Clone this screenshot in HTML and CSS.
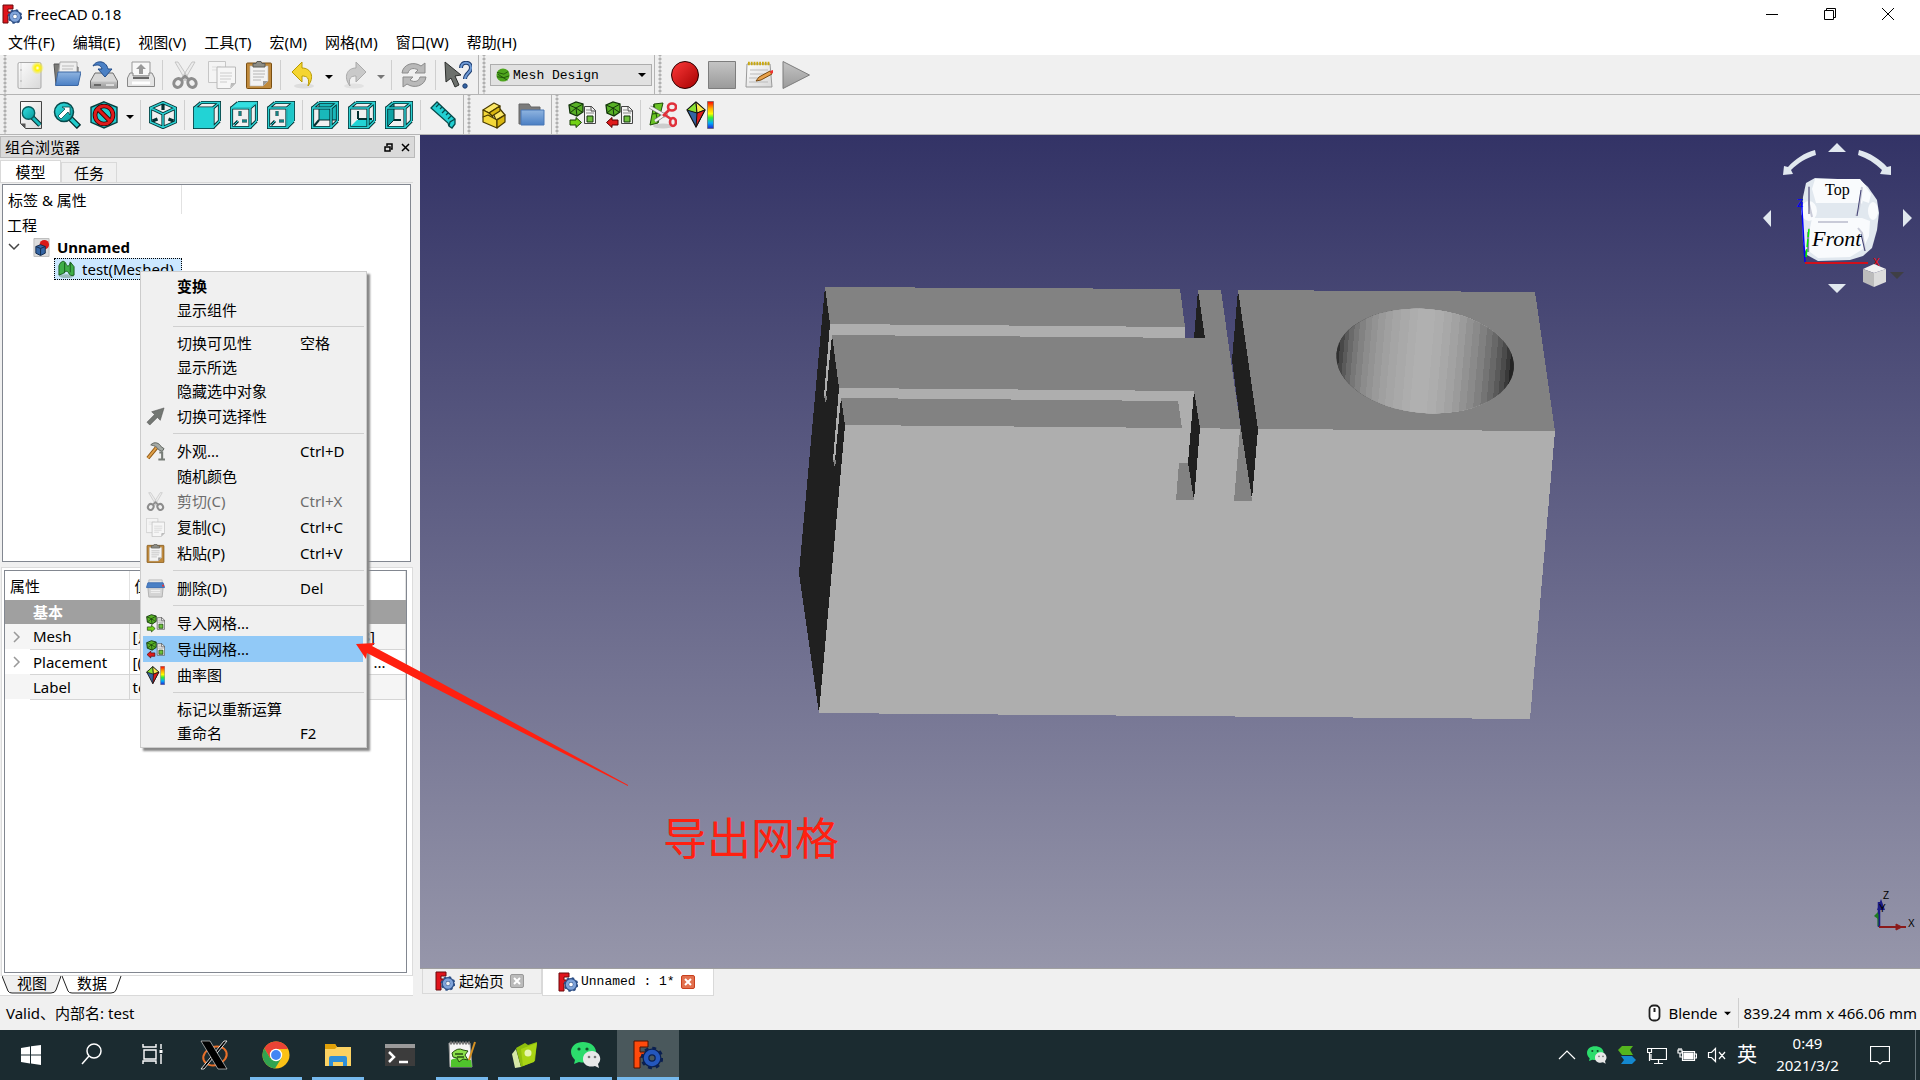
FILE: index.html
```html
<!DOCTYPE html>
<html lang="zh-CN">
<head>
    <meta charset="UTF-8">
    <meta name="viewport" content="width=device-width, initial-scale=1.0">
    <title>FreeCAD 0.18</title>
    <link rel="stylesheet" href="styles.css">
</head>
<body>
    <!-- icons -->
    <svg class="defs" width="0" height="0" aria-hidden="true">
        <defs>
            <linearGradient id="g-blue" x1="0" y1="0" x2="0" y2="1"><stop offset="0" stop-color="#8fb4e0"/><stop offset="1" stop-color="#4a7fc4"/></linearGradient>
            <linearGradient id="g-paper" x1="0" y1="0" x2="1" y2="1"><stop offset="0" stop-color="#fdfdfd"/><stop offset="1" stop-color="#d8d8d8"/></linearGradient>
            <linearGradient id="g-gray" x1="0" y1="0" x2="0" y2="1"><stop offset="0" stop-color="#c4c4c4"/><stop offset="1" stop-color="#9a9a9a"/></linearGradient>
            <linearGradient id="g-red" x1="0" y1="0" x2="1" y2="1"><stop offset="0" stop-color="#ff3a3a"/><stop offset="1" stop-color="#a40000"/></linearGradient>
            <linearGradient id="g-teal" x1="0" y1="0" x2="1" y2="1"><stop offset="0" stop-color="#34e0e2"/><stop offset="1" stop-color="#06989a"/></linearGradient>
            <linearGradient id="g-rainbow" x1="0" y1="0" x2="0" y2="1"><stop offset="0" stop-color="#f00"/><stop offset=".25" stop-color="#fa0"/><stop offset=".45" stop-color="#ff0"/><stop offset=".6" stop-color="#3e3"/><stop offset=".8" stop-color="#0af"/><stop offset="1" stop-color="#22c"/></linearGradient>
            <radialGradient id="g-sun"><stop offset="0" stop-color="#fff"/><stop offset=".35" stop-color="#fff200"/><stop offset="1" stop-color="#fff200" stop-opacity="0"/></radialGradient>
        </defs>
        <symbol id="i-freecad" viewBox="0 0 20 20">
            <path d="M1 1h10v4H6v3h4v3H6v8H1z" fill="#e0141c" stroke="#6b0a0c" stroke-width="1"/>
            <circle cx="13" cy="12.500" r="4.200" fill="none" stroke="#2d4f86" stroke-width="4.600"/>
            <circle cx="13" cy="12.500" r="6" fill="none" stroke="#2d4f86" stroke-width="2.600" stroke-dasharray="2.300 2.410"/>
            <circle cx="13" cy="12.500" r="3.800" fill="none" stroke="#7fa3d9" stroke-width="2.800"/>
        </symbol>
        <symbol id="i-new" viewBox="0 0 28 28">
            <rect x="2" y="1.500" width="23" height="26" rx="1.500" fill="url(#g-paper)" stroke="#a9a9a9"/>
            <path d="M5 2v25" stroke="#ddd"/><circle cx="5" cy="9" r=".8" fill="#aaa"/><circle cx="5" cy="20" r=".8" fill="#aaa"/>
            <circle cx="21.500" cy="7" r="6.500" fill="url(#g-sun)"/>
        </symbol>
        <symbol id="i-open" viewBox="0 0 28 28">
            <path d="M1 3h9l2 3h13v18H3z" fill="#7b7b78" stroke="#555"/>
            <path d="M7 1h17v16H5z" fill="#efefef" stroke="#aaa"/><path d="M9 5h12M9 8h11" stroke="#bbb"/>
            <path d="M5 11h23l-3 13.500H2.500z" fill="url(#g-blue)" stroke="#3c68a5"/>
        </symbol>
        <symbol id="i-save" viewBox="0 0 28 28">
            <path d="M5 12h18l4.500 8v7H.5v-7z" fill="#d8d8d8" stroke="#6d6d6d"/><path d="M1 20.500h26v6H1z" fill="url(#g-gray)"/>
            <path d="M4 24h7" stroke="#666" stroke-width="2"/><path d="M16 24h8" stroke="#ddd" stroke-width="2"/>
            <path d="M3 5C6-1 16-1 18 8h4l-7 8-7-8h4c-1-4-5-5-9-3z" fill="#4a80c5" stroke="#204a87"/>
        </symbol>
        <symbol id="i-print" viewBox="0 0 28 28">
            <path d="M5 1h18v14H5z" fill="#f8f8f8" stroke="#999"/>
            <path d="M14 3l5 5h-3v5h-4V8H9z" fill="#999"/>
            <path d="M3 12h3v3h16v-3h3l2.500 5v8.500H.5V17z" fill="#e4e4e4" stroke="#888"/>
            <path d="M6 17h16" stroke="#666" stroke-width="2"/><path d="M5 22h18" stroke="#fff" stroke-width="3"/>
        </symbol>
        <symbol id="i-cut" viewBox="0 0 28 28">
            <path d="M4 1l3 0 11 17-3 2zM24 1l-3 0-11 17 3 2z" fill="#ececec" stroke="#bbb" stroke-width=".8"/>
            <ellipse cx="7" cy="22" rx="4" ry="4.500" fill="none" stroke="#8d8d8d" stroke-width="3" transform="rotate(30 7 22)"/>
            <ellipse cx="21" cy="22" rx="4" ry="4.500" fill="none" stroke="#8d8d8d" stroke-width="3" transform="rotate(-30 21 22)"/>
            <path d="M10 19l4-4 4 4" fill="none" stroke="#8d8d8d" stroke-width="2.500"/>
        </symbol>
        <symbol id="i-copy" viewBox="0 0 28 28">
            <path d="M.5.5h17v21H.5z" fill="#f4f4f4" stroke="#c6c6c6"/><path d="M4 6h9M4 9h9" stroke="#ddd"/>
            <path d="M9 6h18.500v16l-5 5.500H9z" fill="#f6f6f6" stroke="#b8b8b8"/>
            <path d="M12 12h12M12 15h12M12 18h11M12 21h7" stroke="#ccc"/><path d="M22 27l1-5h5z" fill="#bbb"/>
        </symbol>
        <symbol id="i-paste" viewBox="0 0 28 28">
            <rect x="1.500" y="2" width="25" height="25.500" rx="1" fill="#c08a3c" stroke="#7a4f12"/>
            <path d="M5 5h18v15l-5 5H5z" fill="#f3f3f3" stroke="#bbb" stroke-width=".6"/>
            <path d="M8 10h12M8 13h12M8 16h11M8 19h8" stroke="#b4b4b4"/><path d="M18 25v-5h5z" fill="#999"/>
            <path d="M8 2.500h3l1-2h4l1 2h3V6H8z" fill="#8d8d86" stroke="#5a5a55"/>
        </symbol>
        <symbol id="i-undo" viewBox="0 0 28 28">
            <ellipse cx="15" cy="25" rx="10" ry="2.500" fill="#ddd"/>
            <path d="M3 11L13 1v6c9 0 13 9 6 18 2-8-1-10-6-10v6z" fill="#f5d531" stroke="#b89a00"/>
        </symbol>
        <symbol id="i-redo" viewBox="0 0 28 28">
            <ellipse cx="13" cy="25" rx="10" ry="2.500" fill="#e2e2e2"/>
            <path d="M25 11L15 1v6C6 7 2 16 9 25c-2-8 1-10 6-10v6z" fill="#c9c9c9" stroke="#aaa"/>
        </symbol>
        <symbol id="i-refresh" viewBox="0 0 28 28">
            <path d="M2 12C3 3 14 0 21 5l4-3v10H15l3-3c-5-3-9-1-10 3z" fill="#b9b9b9" stroke="#8b8b8b"/>
            <path d="M26 16c-1 9-12 12-19 7l-4 3V16h10l-3 3c5 3 9 1 10-3z" fill="#b9b9b9" stroke="#8b8b8b"/>
        </symbol>
        <symbol id="i-whatsthis" viewBox="0 0 28 28">
            <path d="M1 1l16 13-6 1 4 9-4 2-4-9-5 4z" fill="#6c706c" stroke="#2b2d2b"/>
            <path d="M17 7c0-7 10-7 10 0 0 5-6 5-6 11" fill="none" stroke="#1d3c6e" stroke-width="4"/>
            <path d="M17 7c0-7 10-7 10 0 0 5-6 5-6 11" fill="none" stroke="#6f9bd6" stroke-width="2"/>
            <circle cx="21" cy="25" r="2.200" fill="#3465a4" stroke="#1d3c6e"/>
        </symbol>
        <symbol id="i-record" viewBox="0 0 28 28"><circle cx="14" cy="14" r="13.500" fill="url(#g-red)" stroke="#280000"/></symbol>
        <symbol id="i-stop" viewBox="0 0 28 28"><path d="M.5.5h27v27H.5z" fill="url(#g-gray)" stroke="#7d7d7d"/></symbol>
        <symbol id="i-play" viewBox="0 0 28 28"><path d="M1 .5L27.500 14 1 27.500z" fill="url(#g-gray)" stroke="#7d7d7d"/></symbol>
        <symbol id="i-macro" viewBox="0 0 28 28">
            <path d="M2 3h23l2 23H1z" fill="url(#g-paper)" stroke="#999"/><path d="M3 2.500h22" stroke="#c9a80f" stroke-width="3.500" stroke-dasharray="1.800 1"/>
            <path d="M5 9h18M5 13h16M4 17h10M4 21h19" stroke="#bbb"/>
            <path d="M11 20l3-4 11-6 2 3-11 6z" fill="#e8a14a" stroke="#7a4a10"/><path d="M25 10l3-1v3l-2 1z" fill="#e33"/>
        </symbol>
        <symbol id="i-fit" viewBox="0 0 28 28">
            <path d="M4.500.5h21v27h-16l-5-5z" fill="url(#g-paper)" stroke="#444"/><path d="M4.500 22.500h5v5z" fill="#555"/>
            <path d="M16 16l8 8" stroke="#032b2c" stroke-width="5"/><path d="M16 16l8 8" stroke="#16b8ba" stroke-width="3"/>
            <circle cx="12.500" cy="12" r="6.200" fill="url(#g-teal)" stroke="#075b5c" stroke-width="1.400"/>
        </symbol>
        <symbol id="i-zoom" viewBox="0 0 28 28">
            <path d="M15 15l11 11" stroke="#032b2c" stroke-width="6"/><path d="M15 15l10 10" stroke="#2cc" stroke-width="3.500"/>
            <circle cx="11" cy="11" r="9.500" fill="url(#g-teal)" stroke="#064a4b" stroke-width="1.500"/>
            <path d="M5 15l7-7-3-2h8v8l-2-3-7 7z" fill="#fff" stroke="#064a4b" stroke-width=".8"/>
        </symbol>
        <symbol id="i-draw" viewBox="0 0 28 28">
            <path d="M14 .8l13 5.500v15L14 27 1 21.300v-15z" fill="#21cdd0" stroke="#053f40" stroke-width="1.400"/>
            <circle cx="14" cy="14" r="9" fill="none" stroke="#300" stroke-width="4.600"/><path d="M8 8l12 12" stroke="#300" stroke-width="4.600"/>
            <circle cx="14" cy="14" r="9" fill="none" stroke="#e01b1b" stroke-width="3"/><path d="M8 8l12 12" stroke="#e01b1b" stroke-width="3"/>
        </symbol>
        <symbol id="i-iso" viewBox="0 0 28 28">
            <path d="M14 1.500L26.500 7v14L14 26.500 1.500 21V7zM1.500 7L14 13 26.500 7M14 13v13M14 3v6M3.500 20l5-2M24.500 20l-5-2" fill="none" stroke="#042f30" stroke-width="3.200"/>
            <path d="M14 1.500L26.500 7v14L14 26.500 1.500 21V7zM1.500 7L14 13 26.500 7M14 13v13" fill="none" stroke="#2cd0d2" stroke-width="1.500"/>
        </symbol>
        <symbol id="i-wire" viewBox="0 0 28 28">
            <path d="M1.500 7H20v19.500H1.500zM8 1.500h18.500V20M1.500 7L8 1.500M20 7l6.500-5.500M20 26.500l6.500-6.500" fill="none" stroke="#042f30" stroke-width="3.200"/>
            <path d="M1.500 7H20v19.500H1.500zM8 1.500h18.500V20M1.500 7L8 1.500M20 7l6.500-5.500M20 26.500l6.500-6.500" fill="none" stroke="#2cd0d2" stroke-width="1.500"/>
        </symbol>
        <symbol id="i-wireback" viewBox="0 0 28 28">
            <path d="M10 10v5M4 24l4-4M12 20h5" fill="none" stroke="#042f30" stroke-width="3"/>
            <path d="M10 10v5M4 24l4-4M12 20h5" fill="none" stroke="#2cd0d2" stroke-width="1"/>
        </symbol>
        <symbol id="i-front" viewBox="0 0 28 28"><use href="#i-wire"/><path d="M1.500 7H20v19.500H1.500z" fill="#22d3d5"/></symbol>
        <symbol id="i-top" viewBox="0 0 28 28"><use href="#i-wireback"/><use href="#i-wire"/><path d="M2 6.500L8 1.500h18l-6 5z" fill="#34e0e2"/></symbol>
        <symbol id="i-right" viewBox="0 0 28 28"><use href="#i-wireback"/><use href="#i-wire"/><path d="M20.500 7l6-5v18l-6 6z" fill="#1fc6c8"/></symbol>
        <symbol id="i-rear" viewBox="0 0 28 28"><path d="M8 2h18v17H8z" fill="#19b8ba" stroke="#042f30"/><path d="M3 25l5-6" stroke="#042f30" stroke-width="2"/><use href="#i-wire"/></symbol>
        <symbol id="i-bottom" viewBox="0 0 28 28"><path d="M10 10v8M10 18h14" stroke="#042f30" stroke-width="2"/><path d="M2 26l7-7h17l-6 7z" fill="#22d3d5"/><use href="#i-wire"/></symbol>
        <symbol id="i-left" viewBox="0 0 28 28"><path d="M2 7l7-5v17l-7 7z" fill="#0fa2a4" stroke="#042f30"/><path d="M9 19h7" stroke="#042f30" stroke-width="2"/><use href="#i-wire"/></symbol>
        <symbol id="i-measure" viewBox="0 0 28 28">
            <path d="M2 7l6-6 18 17v5l-3 4-3-2-1-3z" fill="#23cfd2" stroke="#064a4b" stroke-width="1.300"/>
            <path d="M10 3l-3 3M13 6l-2 2M16 9l-3 3M19 12l-2 2M22 15l-3 3M26 18l-5 3-1 4" fill="none" stroke="#064a4b" stroke-width="1.200"/>
        </symbol>
        <symbol id="i-part" viewBox="0 0 28 28">
            <g stroke="#4a3b00" stroke-width="1.200" stroke-linejoin="round">
                <path d="M13 12l7-4 5 6-9 5z" fill="#fbe765"/>
                <path d="M3 9l11-7 6 3-11 7z" fill="#fbe765"/>
                <path d="M20 5v5l-8 5-3-3z" fill="#d9b70f"/>
                <path d="M3 9l6 3 4 4-1 3-9-3z" fill="#f3d83a"/>
                <path d="M3 16l5-2 9 5v8L3 21z" fill="#f3d83a"/>
                <path d="M17 19l8-5v7l-8 6z" fill="#d9b70f"/>
            </g>
        </symbol>
        <symbol id="i-group" viewBox="0 0 28 28">
            <path d="M2 3h10l2 3h9v17H2z" fill="#7b7b7b" stroke="#666"/><path d="M4 9h23v15H4z" fill="url(#g-blue)" stroke="#4877b5"/>
        </symbol>
        <symbol id="i-meshdoc" viewBox="0 0 28 28">
            <path d="M1 4l7-3 7 2v8l-6 4-7-3z" fill="#57b025" stroke="#12350a" stroke-width="1.300"/>
            <path d="M1 4l7 3 7-4M8 7l1 8M8 7l6 4M8 7l-6 5" fill="none" stroke="#12350a"/>
            <path d="M16.500 5.500h7l4 4v13h-11z" fill="#f4f4f4" stroke="#444"/><path d="M23 5v5h5" fill="none" stroke="#444"/><path d="M18 9h4M18 12h8" stroke="#888"/>
            <path d="M19 15h6v6h-6z" fill="#6dc13a" stroke="#12350a"/>
        </symbol>
        <symbol id="i-import" viewBox="0 0 28 28"><use href="#i-meshdoc"/><path d="M2 19h6v-2.500l5.500 5L8 26.500V24H2z" fill="#73d216" stroke="#183f06"/></symbol>
        <symbol id="i-export" viewBox="0 0 28 28"><use href="#i-meshdoc"/><path d="M13 19H7v-2.500l-5.500 5L7 26.500V24h6z" fill="#e01b1b" stroke="#500"/></symbol>
        <symbol id="i-meshcut" viewBox="0 0 28 28">
            <ellipse cx="14" cy="25" rx="10" ry="2.500" fill="#ccc"/>
            <path d="M5 3l9-1-5 20-8 2z" fill="#6bc425" stroke="#1f4d08"/><path d="M5 3l4 19M3 13l8-1" stroke="#1f4d08"/>
            <path d="M1 6l16 9M6 20l12-8" stroke="#777" stroke-width="3.600"/><path d="M1 6l16 9M6 20l12-8" stroke="#f2f2f2" stroke-width="2.200"/>
            <ellipse cx="23" cy="6" rx="4" ry="3.500" fill="none" stroke="#e0303a" stroke-width="2.600"/><ellipse cx="24" cy="21" rx="3" ry="4" fill="none" stroke="#e0303a" stroke-width="2.600"/>
            <path d="M14 15l6-6M16 14l6 4" stroke="#e0303a" stroke-width="2.600"/>
        </symbol>
        <symbol id="i-curvature" viewBox="0 0 28 28">
            <path d="M10 1L1 9l9 17 9-17z" fill="#3465a4" stroke="#111" stroke-width="1.200"/>
            <path d="M10 1L1 9l10 3z" fill="#8ae234" stroke="#111"/><path d="M10 1l1 11 8-3z" fill="#fce94f" stroke="#111"/><path d="M11 12l-1 14 9-17z" fill="#e01b1b" stroke="#111"/>
            <path d="M21.500.5h6v27h-6z" fill="url(#g-rainbow)" stroke="#555" stroke-width=".6"/>
        </symbol>
        <symbol id="i-meshball" viewBox="0 0 16 16">
            <circle cx="8" cy="8" r="7.500" fill="#4ea51e"/><path d="M1 5l8 2 5-3M1 10l8 1 6-2M2 7l11 7" fill="none" stroke="#1d5208"/>
        </symbol>
        <symbol id="i-select" viewBox="0 0 20 20"><path d="M19 1l-4 13-3-3-8 8-3-3 8-8-3-3z" fill="#737773" stroke="#555" stroke-width=".6"/></symbol>
        <symbol id="i-hammer" viewBox="0 0 20 20">
            <path d="M2 17L11 6" stroke="#8a5410" stroke-width="4"/><path d="M2 17L11 6" stroke="#e0a04a" stroke-width="2"/>
            <path d="M5 3c4-4 9-2 11 2l3 2-2 3-4-2c-1-3-4-4-8-5z" fill="#a5aaa5" stroke="#5b605b"/>
            <path d="M14 11h4M17 10v8M13 18.500h7" stroke="#777c77" stroke-width="2.200"/>
        </symbol>
        <symbol id="i-delete" viewBox="0 0 20 20">
            <path d="M3 1h14v5H3z" fill="#e5e5e5" stroke="#bbb"/><path d="M2 9h16l-1 10H3z" fill="#d4d4d4" stroke="#b0b0b0"/><path d="M5 12h10M5 14h10" stroke="#f4f4f4"/>
            <path d="M2 4h16l1.500 5H.5z" fill="#4a80c5" stroke="#3f70b3"/><path d="M17 7h2" stroke="#e33" stroke-width="2"/>
        </symbol>
        <symbol id="i-down" viewBox="0 0 8 8"><path d="M0 2h8L4 6z"/></symbol>
        <symbol id="i-wechat" viewBox="0 0 30 30">
            <path d="M12 2C5 2 0 6 0 12c0 3 2 6 4 8l-1 4 5-2c9 2 17-2 17-10C25 6 19 2 12 2z" fill="#2cdc6c"/><circle cx="8" cy="9" r="1.600" fill="#14502c"/><circle cx="16" cy="9" r="1.600" fill="#14502c"/>
            <path d="M21 11c-5 0-9 3-9 8 0 6 6 9 12 7l4 2-1-4c5-5 1-13-6-13z" fill="#e8e8e8"/><circle cx="18" cy="17" r="1.300" fill="#777"/><circle cx="24" cy="17" r="1.300" fill="#777"/>
        </symbol>
    </svg>

    <header class="titlebar">
        <svg class="app-icon"><use href="#i-freecad"/></svg>
        <h1>FreeCAD 0.18</h1>
        <div class="window-buttons">
            <button aria-label="最小化"><svg viewBox="0 0 12 12"><path d="M0 6.500h12"/></svg></button>
            <button aria-label="还原"><svg viewBox="0 0 12 12"><path d="M.5 2.500h9v9h-9zM2.500 2.500v-2h9v9h-2"/></svg></button>
            <button aria-label="关闭"><svg viewBox="0 0 12 12"><path d="M0 0l12 12M12 0L0 12"/></svg></button>
        </div>
    </header>

    <nav class="menubar">
        <button>文件(F)</button>
        <button>编辑(E)</button>
        <button>视图(V)</button>
        <button>工具(T)</button>
        <button>宏(M)</button>
        <button>网格(M)</button>
        <button>窗口(W)</button>
        <button>帮助(H)</button>
    </nav>

    <div class="toolbar">
        <div class="group">
            <button class="tool" aria-label="新建"><svg><use href="#i-new"/></svg></button>
            <button class="tool" aria-label="打开"><svg><use href="#i-open"/></svg></button>
            <button class="tool" aria-label="保存"><svg><use href="#i-save"/></svg></button>
            <button class="tool" aria-label="打印"><svg><use href="#i-print"/></svg></button>
            <span class="sep"></span>
            <button class="tool" aria-label="剪切"><svg><use href="#i-cut"/></svg></button>
            <button class="tool" aria-label="复制"><svg><use href="#i-copy"/></svg></button>
            <button class="tool" aria-label="粘贴"><svg><use href="#i-paste"/></svg></button>
            <span class="sep"></span>
            <button class="tool" aria-label="撤销"><svg><use href="#i-undo"/></svg></button>
            <button class="drop" aria-label="撤销列表"><svg><use href="#i-down"/></svg></button>
            <button class="tool" aria-label="重做"><svg><use href="#i-redo"/></svg></button>
            <button class="drop off" aria-label="重做列表"><svg><use href="#i-down"/></svg></button>
            <span class="sep"></span>
            <button class="tool" aria-label="刷新"><svg><use href="#i-refresh"/></svg></button>
            <span class="sep"></span>
            <button class="tool" aria-label="这是什么"><svg><use href="#i-whatsthis"/></svg></button>
        </div>
        <div class="group">
            <div class="workbench">
                <svg class="wb-icon"><use href="#i-meshball"/></svg>
                <select aria-label="工作台">
                    <option>Mesh Design</option>
                </select>
                <svg class="wb-arrow"><use href="#i-down"/></svg>
            </div>
        </div>
        <div class="group last">
            <button class="tool" aria-label="录制宏"><svg><use href="#i-record"/></svg></button>
            <button class="tool" aria-label="停止"><svg><use href="#i-stop"/></svg></button>
            <button class="tool" aria-label="宏"><svg><use href="#i-macro"/></svg></button>
            <button class="tool" aria-label="执行宏"><svg><use href="#i-play"/></svg></button>
        </div>
    </div>

    <div class="toolbar">
        <div class="group">
            <button class="tool" aria-label="适合全部"><svg><use href="#i-fit"/></svg></button>
            <button class="tool" aria-label="适合所选"><svg><use href="#i-zoom"/></svg></button>
            <button class="tool" aria-label="绘图样式"><svg><use href="#i-draw"/></svg></button>
            <button class="drop" aria-label="样式列表"><svg><use href="#i-down"/></svg></button>
            <span class="sep"></span>
            <button class="tool" aria-label="轴测图"><svg><use href="#i-iso"/></svg></button>
            <span class="sep"></span>
            <button class="tool" aria-label="前视"><svg><use href="#i-front"/></svg></button>
            <button class="tool" aria-label="俯视"><svg><use href="#i-top"/></svg></button>
            <button class="tool" aria-label="右视"><svg><use href="#i-right"/></svg></button>
            <span class="sep"></span>
            <button class="tool" aria-label="后视"><svg><use href="#i-rear"/></svg></button>
            <button class="tool" aria-label="仰视"><svg><use href="#i-bottom"/></svg></button>
            <button class="tool" aria-label="左视"><svg><use href="#i-left"/></svg></button>
            <span class="sep"></span>
            <button class="tool" aria-label="测量"><svg><use href="#i-measure"/></svg></button>
        </div>
        <div class="group">
            <button class="tool" aria-label="零件"><svg><use href="#i-part"/></svg></button>
            <button class="tool" aria-label="组"><svg><use href="#i-group"/></svg></button>
        </div>
        <div class="group last">
            <button class="tool" aria-label="导入网格"><svg><use href="#i-import"/></svg></button>
            <button class="tool" aria-label="导出网格"><svg><use href="#i-export"/></svg></button>
            <span class="sep"></span>
            <button class="tool" aria-label="裁剪网格"><svg><use href="#i-meshcut"/></svg></button>
            <button class="tool" aria-label="曲率图"><svg><use href="#i-curvature"/></svg></button>
        </div>
    </div>

    <main class="workspace">
        <aside class="dock">
            <div class="dock-title">
                <h2>组合浏览器</h2>
                <button aria-label="浮动"><svg viewBox="0 0 9 9"><path d="M1 4h5v4H1zM3 3V1h5v5H7"/></svg></button>
                <button aria-label="关闭"><svg viewBox="0 0 9 9"><path d="M1 1l7 7M8 1L1 8"/></svg></button>
            </div>
            <div class="tabs">
                <button class="active">模型</button>
                <button>任务</button>
            </div>
            <div class="tree">
                <div class="tree-head">标签 &amp; 属性</div>
                <div class="tree-row">工程</div>
                <div class="tree-row doc">
                    <svg class="chevron" viewBox="0 0 12 12"><path d="M1 3l5 5 5-5"/></svg>
                    <svg class="row-icon" viewBox="0 0 18 20"><path d="M1 .5h16v19H1z" fill="#ddd" stroke="#bbb"/><circle cx="12" cy="7" r="5" fill="#d81818"/><path d="M3 9l5-2 5 2v7l-5 2.500L3 16z" fill="#3465a4" stroke="#13294a"/><path d="M3 9l5 2 5-2M8 11v7" fill="none" stroke="#13294a"/></svg>
                    <b>Unnamed</b>
                </div>
                <div class="tree-row item">
                    <span class="selected">
                        <svg class="row-icon" viewBox="0 0 18 20"><ellipse cx="9" cy="17" rx="8" ry="2" fill="#9bb"/><path d="M1 6c2-5 5-6 7-3 2 5 4 4 5-1l4 5v9c-3 1-5 0-6-3-2-2-4-1-5 1l-5 2z" fill="#3fae49" stroke="#175c1e"/><path d="M7 3v11M13 3v10" stroke="#175c1e"/></svg>
                        test(Meshed)
                    </span>
                </div>
            </div>
            <div class="props">
                <div class="props-inner">
                    <table>
                        <colgroup><col class="c-branch"><col class="c-name"><col></colgroup>
                        <thead>
                            <tr><th colspan="2">属性</th><th>值</th></tr>
                        </thead>
                        <tbody>
                            <tr class="section"><td></td><td colspan="2">基本</td></tr>
                            <tr class="odd"><td class="branch"><svg class="chevron" viewBox="0 0 12 12"><path d="M3 1l5 5-5 5"/></svg></td><td>Mesh</td><td>[点数: 1284, 边数: 3852, 面数: 2568]</td></tr>
                            <tr><td class="branch"><svg class="chevron" viewBox="0 0 12 12"><path d="M3 1l5 5-5 5"/></svg></td><td>Placement</td><td>[(0.00 0.00 1.00); 0.00 °; (0.00 mm &nbsp;...</td></tr>
                            <tr class="odd"><td class="branch"></td><td>Label</td><td>test</td></tr>
                        </tbody>
                    </table>
                </div>
            </div>
            <div class="bottom-tabs">
                <button><svg viewBox="0 0 60 18" preserveAspectRatio="none"><path d="M0 0l6 15q1 2 4 2h39q4 0 5-3l5-14" fill="#efefef" stroke="#222"/></svg><span>视图</span></button>
                <button><svg viewBox="0 0 60 18" preserveAspectRatio="none"><path d="M0 0l6 15q1 2 4 2h39q4 0 5-3l5-14" fill="#fff" stroke="#222"/></svg><span>数据</span></button>
            </div>
        </aside>

        <section class="view-area">
            <div class="viewport">
                <svg class="scene" viewBox="420 135 1500 833" preserveAspectRatio="xMaxYMid meet">
                    <defs>
                        <clipPath id="hole"><ellipse cx="1425" cy="361" rx="89" ry="52"/></clipPath>
                    </defs>
                    <g shape-rendering="crispEdges">
                        <polygon points="825,287 799,573 819,713 845,425" fill="#202020"/>
                        <polygon points="825,287 1180,289 1185,327 830,324" fill="#828282"/>
                        <polygon points="830,324 1185,327 1185,338 832,335 826,396 824,396" fill="#aeaeae"/>
                        <polygon points="824,396 827,396 826,404" fill="#828282"/>
                        <polygon points="845,425 1241,428 1555,431 1530,719 819,713" fill="#aeaeae"/>
                        <polygon points="832,335 1205,338 1198,290 1221,290 1231,362 1241,429 1199,428 1194,391 839,388" fill="#828282"/>
                        <polygon points="832,335 839,388 836,425" fill="#202020"/>
                        <polygon points="1198,290 1194,338 1205,338" fill="#202020"/>
                        <polygon points="839,388 1194,391 1190,463 1182,428 841,398 835,460 833,460" fill="#aeaeae"/>
                        <polygon points="833,460 836,460 835,468" fill="#828282"/>
                        <polygon points="841,398 1178,401 1182,428 845,425" fill="#828282"/>
                        <polygon points="1178,401 1194,391 1200,428 1182,428" fill="#aeaeae"/>
                        <polygon points="1179,463 1189,463 1194,500 1176,500" fill="#828282"/>
                        <polygon points="1194,391 1200,428 1194,500 1188,463" fill="#202020"/>
                        <polygon points="1238,290 1535,292 1555,431 1258,429" fill="#828282"/>
                        <polygon points="1240,429 1234,501 1252,501 1244,429" fill="#828282"/>
                        <polygon points="1238,290 1232,360 1241,429 1252,499 1258,429" fill="#202020"/>
                    </g>
                    <!-- facets of the drilled hole -->
                    <g transform="rotate(5 1425 361)">
                        <g clip-path="url(#hole)" shape-rendering="crispEdges">
                            <rect x="1336" y="305" width="180" height="112" fill="#303030"/>
                            <rect x="1339" y="305" width="180" height="112" fill="#484848"/>
                            <rect x="1343" y="305" width="180" height="112" fill="#5a5a5a"/>
                            <rect x="1347" y="305" width="180" height="112" fill="#6a6a6a"/>
                            <rect x="1352" y="305" width="180" height="112" fill="#777"/>
                            <rect x="1357" y="305" width="180" height="112" fill="#828282"/>
                            <rect x="1363" y="305" width="180" height="112" fill="#8c8c8c"/>
                            <rect x="1369" y="305" width="180" height="112" fill="#939393"/>
                            <rect x="1375" y="305" width="180" height="112" fill="#9a9a9a"/>
                            <rect x="1382" y="305" width="180" height="112" fill="#a0a0a0"/>
                            <rect x="1389" y="305" width="180" height="112" fill="#a5a5a5"/>
                            <rect x="1397" y="305" width="180" height="112" fill="#a9a9a9"/>
                            <rect x="1406" y="305" width="180" height="112" fill="#adadad"/>
                            <rect x="1414" y="305" width="180" height="112" fill="#b0b0b0"/>
                            <rect x="1431" y="305" width="180" height="112" fill="#adadad"/>
                            <rect x="1440" y="305" width="180" height="112" fill="#a8a8a8"/>
                            <rect x="1448" y="305" width="180" height="112" fill="#a2a2a2"/>
                            <rect x="1456" y="305" width="180" height="112" fill="#9b9b9b"/>
                            <rect x="1463" y="305" width="180" height="112" fill="#929292"/>
                            <rect x="1470" y="305" width="180" height="112" fill="#8a8a8a"/>
                            <rect x="1477" y="305" width="180" height="112" fill="#808080"/>
                            <rect x="1484" y="305" width="180" height="112" fill="#747474"/>
                            <rect x="1490" y="305" width="180" height="112" fill="#686868"/>
                            <rect x="1496" y="305" width="180" height="112" fill="#5a5a5a"/>
                            <rect x="1501" y="305" width="180" height="112" fill="#4b4b4b"/>
                            <rect x="1506" y="305" width="180" height="112" fill="#393939"/>
                            <rect x="1510" y="305" width="180" height="112" fill="#242424"/>
                        </g>
                    </g>
                    <!-- navigation cube -->
                    <g fill="#e1e8ef">
                        <path d="M1837 143l9 9h-18zM1837 293l9-9h-18zM1763 218l8-8v17zM1912 218l-9-9v18z"/>
                        <path d="M1815 150l1 5c-10 3-18 8-25 15l2 4-10 1 1-9 4 1c7-8 16-14 27-17zM1859 150l-1 5c9 3 17 8 24 15l-2 4 11 1v-9l-4 1c-7-8-17-14-28-17z"/>
                        <path d="M1806 183L1815 178 1860 180 1868 187 1877 200 1879 213 1877 230 1872 248 1863 256 1850 260 1818 261 1807 255 1803 243 1802 210 1803 197z"/>
                    </g>
                    <g fill="#f9fbfd">
                        <path d="M1815 179h45l6 7-4 18-1 -1-45 0-4-14zM1812 218h50l8 3-1 15-6 13-13 8-32 1-8-6-2-14zM1863 183l8 11-2 9-6-2z"/>
                        <ellipse cx="1809" cy="211" rx="8" ry="10"/><ellipse cx="1873" cy="211" rx="5" ry="9"/>
                    </g>
                    <path d="M1809 186v18l3 13M1862 187l-3 21-3 8M1818 222h30M1858 228l4 5 3 18M1809 228l-1 24" fill="none" stroke="#c9cbd8" stroke-width="2"/>
                    <path d="M1809 187v27M1861 190l-4 26M1808 232v20M1861 234l4 17" fill="none" stroke="#444375"/>
                    <path d="M1805 262l-3-52v-8" fill="none" stroke="#00f" stroke-width="1.500"/>
                    <path d="M1806 257l3-28" stroke="#0e0" stroke-width="1.500" stroke-dasharray="8 2"/>
                    <path d="M1805 263h63" stroke="#f00" stroke-width="1.500"/>
                    <text class="cube-top" x="1825" y="195">Top</text>
                    <text class="cube-front" x="1812" y="246">Front</text>
                    <text class="cube-axis" x="1797" y="207" fill="#00f">Z</text>
                    <text class="cube-axis" x="1873" y="266" fill="#f00">X</text>
                    <path d="M1863 269l11-5 12 5-12 4z" fill="#f1f1f1"/><path d="M1863 269l11 4v14l-11-5z" fill="#bcbcbc"/><path d="M1886 269l-12 4v14l12-5z" fill="#dcdcdc"/>
                    <path d="M1890 272h14l-7 7z" fill="#3f3f45"/>
                    <!-- axis cross -->
                    <path d="M1879 927v-25" stroke="#1b1b85" stroke-width="2.500"/><path d="M1881 899l4 11h-8z" fill="#1b1b85"/>
                    <path d="M1878 926v-12" stroke="#1f7d1f"/><path d="M1874 916l4-4v7z" fill="#1f7d1f"/>
                    <path d="M1879 927h27" stroke="#8b1a1a" stroke-width="2"/><path d="M1896 924l6 3-6 3z" fill="#8b1a1a" stroke="#8b1a1a"/>
                    <text class="axis" x="1883" y="899">Z</text>
                    <text class="axis" x="1879" y="912">Y</text>
                    <text class="axis" x="1908" y="927">X</text>
                </svg>
            </div>
            <div class="doc-tabs">
                <div class="doc-tab">
                    <svg class="app-icon"><use href="#i-freecad"/></svg>
                    <button class="doc-name">起始页</button>
                    <button class="close" aria-label="关闭起始页"><svg viewBox="0 0 8 8"><path d="M1 1l6 6M7 1L1 7"/></svg></button>
                </div>
                <div class="doc-tab active">
                    <svg class="app-icon"><use href="#i-freecad"/></svg>
                    <button class="doc-name">Unnamed : 1*</button>
                    <button class="close" aria-label="关闭文档"><svg viewBox="0 0 8 8"><path d="M1 1l6 6M7 1L1 7"/></svg></button>
                </div>
            </div>
        </section>
    </main>

    <footer class="statusbar">
        <span class="status-text">Valid、内部名: test</span>
        <button class="nav-style">
            <svg class="mouse" viewBox="0 0 14 18"><rect x="1.500" y="1.500" width="10" height="15" rx="4" fill="#fff" stroke="#222" stroke-width="1.800"/><path d="M6.500 4v4" stroke="#222" stroke-width="2"/></svg>
            Blende
            <svg class="small-arrow"><use href="#i-down"/></svg>
        </button>
        <span class="dims">839.24 mm x 466.06 mm</span>
    </footer>

    <div class="taskbar">
        <button class="task system" aria-label="开始"><svg viewBox="0 0 30 30"><path d="M5 8l9-1.500V14.500H5zM15 6.300L25 5v9.500H15zM5 15.500h9v8L5 22zM15 15.500h10V25l-10-1.400z" fill="#fff"/></svg></button>
        <button class="task system" aria-label="搜索"><svg viewBox="0 0 30 30"><circle cx="17" cy="11" r="7" fill="none" stroke="#fff" stroke-width="1.500"/><path d="M12 16l-7 8" stroke="#fff" stroke-width="1.500"/></svg></button>
        <button class="task system" aria-label="任务视图"><svg viewBox="0 0 30 30"><path d="M5 4v3h13V4M6 10h12v9H6zM5 24v-3h13v3M23 4v5M23 14v10" fill="none" stroke="#fff" stroke-width="1.400"/><path d="M21.500 10h3v3h-3z" fill="#fff"/></svg></button>
        <button class="task" aria-label="X"><svg viewBox="0 0 30 30"><ellipse cx="16" cy="16" rx="12" ry="9" fill="none" stroke="#e8702a" stroke-width="2" transform="rotate(-20 16 16)"/><path d="M25 1h3L5 29H2z" fill="#000" stroke="#eee" stroke-width=".9"/><path d="M2 1h9l17 28h-9z" fill="#000" stroke="#eee" stroke-width=".6"/></svg></button>
        <button class="task running" aria-label="Chrome"><svg viewBox="0 0 30 30"><circle cx="15" cy="15" r="13.500" fill="#fbc116"/><path d="M3.300 8.300A13.500 13.500 0 0 1 27 9H15l-6 9z" fill="#ea4335"/><path d="M3.300 8.300A13.500 13.500 0 0 0 14 28.500L20.500 18 9 18z" fill="#31a350"/><circle cx="15" cy="15" r="6.200" fill="#fff"/><circle cx="15" cy="15" r="4.900" fill="#4285f4"/></svg></button>
        <button class="task running" aria-label="资源管理器"><svg viewBox="0 0 30 30"><path d="M2 4h10l2 3h14v19H2z" fill="#fcd262"/><path d="M2 4h10l2 3-2 2H2z" fill="#e0a008"/><path d="M6 26V18q0-2 2-2h14q2 0 2 2v8h-4v-4H10v4z" fill="#2f8fd8"/></svg></button>
        <button class="task" aria-label="终端"><svg viewBox="0 0 30 30"><path d="M0 4h30v22H0z" fill="#3c3c3c"/><path d="M0 4h30v4H0z" fill="#9a9a9a"/><path d="M4 12l5 5-5 5" fill="none" stroke="#fff" stroke-width="2.500"/><path d="M14 22h9" stroke="#fff" stroke-width="2.500"/></svg></button>
        <button class="task running" aria-label="Notepad++"><svg viewBox="0 0 30 30"><path d="M2 3h21l2 24H3z" fill="#f5f5f5" stroke="#999"/><path d="M3 3h20" stroke="#777" stroke-width="3" stroke-dasharray="2 1"/><path d="M4 20c5-3 15-2 20 0l1 7H4z" fill="#4fc32c"/><path d="M5 13q6-6 11-3l5 1-3 4 3 5-5-1-4 3-2-4-4-1z" fill="#8be04a" stroke="#264d12"/><path d="M8 14h8M10 17h7" stroke="#264d12" stroke-width="1.500"/><path d="M28 2l-6 18" stroke="#d79222" stroke-width="2"/></svg></button>
        <button class="task running" aria-label="看图"><svg viewBox="0 0 30 30"><path d="M3 14l4-5 5 18-6 1z" fill="#d7e8a8"/><path d="M7 8l9-5 3 2 9-3-2 19-14 6z" fill="#8fbf0d"/><path d="M12 9l16-6-3 19-11 4z" fill="#a9d515"/><circle cx="19" cy="13" r="3.500" fill="#e7f6b0"/></svg></button>
        <button class="task running" aria-label="微信"><svg viewBox="0 0 30 30"><use href="#i-wechat"/></svg></button>
        <button class="task running current" aria-label="FreeCAD"><svg viewBox="0 0 30 30"><path d="M1 1h14v6H7v5h7v5H7v11H1z" fill="#ff4a0c" stroke="#4a1000"/><circle cx="19" cy="18" r="6" fill="none" stroke="#0b2050" stroke-width="7"/><circle cx="19" cy="18" r="9.500" fill="none" stroke="#0b2050" stroke-width="3.500" stroke-dasharray="3.700 3.760"/><circle cx="19" cy="18" r="6" fill="none" stroke="#2457bd" stroke-width="4.500"/></svg></button>
        <div class="tray">
            <button aria-label="显示隐藏的图标"><svg viewBox="0 0 20 20"><path d="M2 14l8-8 8 8"/></svg></button>
            <button aria-label="微信"><svg viewBox="0 0 20 20"><use href="#i-wechat"/></svg></button>
            <button aria-label="同步"><svg viewBox="0 0 20 20"><path d="M5 1h11l-3 4 3 5H5L1 5z" fill="#55b51e" stroke="none"/><path d="M4 11h11l4 4-4 4H4l3-4z" fill="#1488cf" stroke="none"/></svg></button>
            <button aria-label="网络"><svg viewBox="0 0 20 20"><path d="M5 3.500h14.500v11H4V9M11.500 15v3M7 18.500h9M.5 3.500h4v4h-4zM2.500 7v9"/></svg></button>
            <button aria-label="电源"><svg viewBox="0 0 20 20"><path d="M5.500 6.500h12v9h-12zM18 9h1.500v4H18M1 5h4v3H1zM2 5V3M4 5V3M3 8v4h2"/><path d="M7 8h9v6H7z" fill="#fff"/></svg></button>
            <button aria-label="音量"><svg viewBox="0 0 20 20"><path d="M1.500 7.500h3l4-4v13l-4-4h-3zM12 7l6 7M18 7l-6 7"/></svg></button>
            <button class="ime">英</button>
            <button class="clock"><span>0:49</span><span>2021/3/2</span></button>
            <button class="notice" aria-label="通知"><svg viewBox="0 0 20 20"><path d="M.5 1.500h19v15h-7L10 19l-2.500-2.500h-7z"/></svg></button>
        </div>
    </div>

    <!-- context menu over the tree -->
    <div class="context-menu">
        <button><b>变换</b></button>
        <button>显示组件</button>
        <hr>
        <button>切换可见性<kbd>空格</kbd></button>
        <button>显示所选</button>
        <button>隐藏选中对象</button>
        <button class="tall"><svg><use href="#i-select"/></svg>切换可选择性</button>
        <hr>
        <button class="tall"><svg><use href="#i-hammer"/></svg>外观...<kbd>Ctrl+D</kbd></button>
        <button>随机颜色</button>
        <button class="tall" disabled><svg><use href="#i-cut"/></svg>剪切(C)<kbd>Ctrl+X</kbd></button>
        <button class="tall"><svg><use href="#i-copy"/></svg>复制(C)<kbd>Ctrl+C</kbd></button>
        <button class="tall"><svg><use href="#i-paste"/></svg>粘贴(P)<kbd>Ctrl+V</kbd></button>
        <hr>
        <button class="tall"><svg><use href="#i-delete"/></svg>删除(D)<kbd>Del</kbd></button>
        <hr>
        <button class="tall"><svg><use href="#i-import"/></svg>导入网格...</button>
        <button class="tall hover"><svg><use href="#i-export"/></svg>导出网格...</button>
        <button class="tall"><svg><use href="#i-curvature"/></svg>曲率图</button>
        <hr>
        <button>标记以重新运算</button>
        <button>重命名<kbd>F2</kbd></button>
    </div>

    <svg class="arrow" viewBox="0 0 280 150"><path d="M1 4l19-1-3 3 49 26 207 113v1L64 40 12 13l-1 6z" fill="#ff2010"/></svg>
    <p class="note">导出网格</p>
</body>
</html>
```
FILE: styles.css
```css
* {
    box-sizing: border-box;
}

body {
    margin: 0;
    min-height: 100vh;
    display: flex;
    flex-direction: column;
    position: relative;
    overflow: hidden;
    background-color: #f0f0f0;
    color: #000;
    font-family: "Noto Sans", "Noto Sans CJK SC", sans-serif;
    font-size: 15px;
    line-height: 20px;
}

button {
    margin: 0;
    padding: 0;
    border: none;
    background: none;
    color: inherit;
    font: inherit;
}

h1, h2, p {
    margin: 0;
    font-size: 15px;
    font-weight: normal;
}

svg {
    flex: none;
}

.defs {
    position: absolute;
}

.app-icon {
    width: 20px;
    height: 20px;
}

/* title and menu */

.titlebar {
    display: flex;
    align-items: center;
    height: 28px;
    padding-left: 2px;
    background-color: #fff;
}

.titlebar h1 {
    margin-left: 5px;
}

.window-buttons {
    display: flex;
    margin-left: auto;
    margin-right: 3px;
}

.window-buttons button {
    width: 58px;
    height: 28px;
}

.window-buttons svg {
    width: 12px;
    height: 12px;
    fill: none;
    stroke: #000;
}

.menubar {
    display: flex;
    gap: 18px;
    height: 27px;
    padding: 0 8px;
    background-color: #fff;
}

/* toolbars */

.toolbar {
    display: flex;
    height: 40px;
    border-bottom: 1px solid #b4b4b4;
}

.group {
    display: flex;
    align-items: center;
    padding: 0 2px 0 11px;
    border-right: 1px solid #b4b4b4;
    background: radial-gradient(circle, #b0b0b0 1px, transparent 2px) 3px 2px / 4px 4px repeat-y;
}

.group.last {
    border-right: none;
}

.tool {
    display: flex;
    align-items: center;
    justify-content: center;
    width: 37px;
    height: 37px;
}

.tool svg {
    width: 28px;
    height: 28px;
}

.sep {
    width: 1px;
    height: 30px;
    margin: 0 3px;
    background-color: #cfcfcf;
}

.drop {
    width: 15px;
}

.drop svg {
    width: 8px;
    height: 8px;
}

.off {
    fill: #777;
}

.workbench {
    display: flex;
    align-items: center;
    width: 162px;
    height: 22px;
    padding: 0 5px;
    border: 1px solid #adadad;
    background-color: #e1e1e1;
}

.wb-icon {
    width: 14px;
    height: 14px;
}

.workbench select {
    flex: 1;
    padding: 2px 3px 0;
    border: none;
    background: none;
    appearance: none;
    color: #000;
    font-family: "Liberation Mono", monospace;
    font-size: 13px;
}

.wb-arrow {
    width: 8px;
    height: 8px;
}

/* dock */

.workspace {
    flex: 1;
    display: flex;
    min-height: 0;
}

.dock {
    display: flex;
    flex-direction: column;
    width: 415px;
    margin-right: 5px;
    padding-top: 1px;
}

.dock-title {
    display: flex;
    align-items: center;
    height: 22px;
    padding-left: 4px;
    border: 1px solid #b9b9b9;
    background-color: #dadada;
}

.dock-title h2 {
    flex: 1;
}

.dock-title button {
    width: 17px;
    line-height: 9px;
}

.dock-title svg {
    width: 9px;
    height: 9px;
    fill: none;
    stroke: #000;
    stroke-width: 1.5;
}

.tabs {
    display: flex;
    align-items: flex-end;
    height: 25px;
    margin-right: 2px;
    border-bottom: 1px solid #d9d9d9;
}

.tabs button {
    width: 56px;
    height: 20px;
    border: 1px solid #d9d9d9;
    border-bottom: none;
    line-height: 18px;
}

.tabs .active {
    width: 61px;
    height: 22px;
    background-color: #fff;
}

.tree {
    height: 378px;
    margin: 1px 4px 0 2px;
    border: 1px solid #828790;
    background-color: #fff;
}

.tree-head {
    width: 179px;
    height: 29px;
    padding: 5px;
    border-right: 1px solid #e2e2e2;
}

.tree-row {
    display: flex;
    align-items: center;
    height: 22px;
    padding-left: 4px;
}

.tree-row.doc {
    padding-left: 5px;
}

.tree-row.item {
    padding-left: 51px;
}

.tree-row b {
    margin-left: 7px;
}

.chevron {
    width: 12px;
    height: 12px;
    fill: none;
    stroke: #444;
    stroke-width: 1.5;
}

.doc .chevron {
    margin-right: 13px;
}

.row-icon {
    width: 17px;
    height: 19px;
}

.selected {
    display: flex;
    align-items: center;
    gap: 7px;
    width: 128px;
    height: 22px;
    padding-left: 3px;
    border: 1px dotted #000;
    background-color: #cce8ff;
    white-space: nowrap;
}

.props {
    flex: 1;
    display: flex;
    margin: 5px 2px 0 1px;
    padding: 2px 5px 2px 2px;
    border: 1px solid #dcdcdc;
    background-color: #fff;
}

.props-inner {
    flex: 1;
    border: 1px solid #828790;
}

.props table {
    width: 100%;
    border-collapse: collapse;
    table-layout: fixed;
}

.c-branch {
    width: 25px;
}

.c-name {
    width: 99px;
}

.props th {
    height: 29px;
    padding: 0 5px;
    border-right: 1px solid #e2e2e2;
    font-weight: normal;
    text-align: left;
}

.props td {
    height: 25px;
    padding: 0 4px 0 3px;
    border-right: 1px solid #d5d5d5;
    border-bottom: 1px solid #d5d5d5;
    white-space: nowrap;
    overflow: hidden;
}

.props .odd {
    background-color: #f5f5f5;
}

.props .branch {
    padding-left: 6px;
    border: none;
    line-height: 12px;
}

.branch .chevron {
    stroke: #999;
}

.props .section td {
    height: 24px;
    border: none;
    background-color: #a0a0a0;
    color: #fff;
    font-weight: bold;
}

.bottom-tabs {
    display: flex;
    height: 20px;
    margin-right: 2px;
    padding-left: 2px;
    border-bottom: 1px solid #d9d9d9;
    background-color: #fff;
}

.bottom-tabs button {
    display: grid;
    width: 60px;
    height: 18px;
}

.bottom-tabs button > * {
    grid-area: 1 / 1;
}

.bottom-tabs svg {
    width: 60px;
    height: 18px;
}

.bottom-tabs span {
    line-height: 14px;
}

/* 3d view */

.view-area {
    flex: 1;
    display: flex;
    flex-direction: column;
}

.viewport {
    flex: 1;
    position: relative;
    background: linear-gradient(#333366, #9696aa);
}

.scene {
    position: absolute;
    width: 100%;
    height: 100%;
}

.cube-top, .cube-front {
    font-family: "Liberation Serif", serif;
    font-size: 16px;
}

.cube-front {
    font-size: 22px;
    font-style: italic;
}

.cube-axis, .axis {
    font-family: "Liberation Sans", sans-serif;
    font-size: 10px;
}

.doc-tabs {
    display: flex;
    align-items: flex-start;
    height: 28px;
    padding-left: 2px;
    border-top: 1px solid #a0a0a0;
}

.doc-tab {
    display: flex;
    align-items: center;
    height: 25px;
    padding: 0 17px 0 12px;
    border: 1px solid #d9d9d9;
    border-top: none;
}

.doc-tab.active {
    height: 27px;
    padding: 0 18px 0 15px;
    background-color: #fff;
}

.doc-name {
    margin: 0 6px 0 4px;
}

.active .doc-name {
    margin-left: 3px;
    font-family: "Liberation Mono", monospace;
    font-size: 13px;
}

.close {
    display: flex;
    align-items: center;
    justify-content: center;
    width: 14px;
    height: 14px;
    border: 1px solid #999;
    border-radius: 2px;
    background-color: #bbb;
}

.active .close {
    border-color: #c8401e;
    background-color: #e2704e;
}

.close svg {
    width: 8px;
    height: 8px;
    stroke: #fff;
    stroke-width: 2;
}

/* status bar */

.statusbar {
    display: flex;
    align-items: center;
    height: 34px;
    padding-left: 6px;
}

.status-text {
    flex: 1;
}

.nav-style {
    display: flex;
    align-items: center;
    gap: 6px;
    padding-right: 7px;
}

.mouse {
    width: 14px;
    height: 18px;
}

.small-arrow {
    width: 7px;
    height: 7px;
}

.dims {
    padding: 5px 3px 5px 5px;
    border-left: 1px solid #cfcfcf;
}

/* windows taskbar */

.taskbar {
    display: flex;
    height: 50px;
    background-color: #1b2b30;
    color: #fff;
}

.task {
    display: flex;
    align-items: center;
    justify-content: center;
    width: 62px;
}

.task.system {
    width: 61px;
}

.task svg {
    width: 30px;
    height: 30px;
}

.running {
    background: linear-gradient(#76b9ed, #76b9ed) bottom / 52px 3px no-repeat;
}

.current {
    background-color: #4a585c;
    background-size: 62px 3px;
}

.tray {
    display: flex;
    align-items: center;
    margin-left: auto;
    margin-right: 4px;
    border-right: 1px solid #66747a;
}

.tray button {
    display: flex;
    align-items: center;
    justify-content: center;
    width: 30px;
    height: 50px;
}

.tray svg {
    width: 20px;
    height: 20px;
    fill: none;
    stroke: #fff;
    stroke-width: 1.2;
}

.tray use {
    stroke: none;
}

.tray .ime {
    font-size: 20px;
}

.tray .clock {
    flex-direction: column;
    gap: 2px;
    width: 91px;
    padding-bottom: 2px;
}

.tray .notice {
    width: 54px;
    margin-right: 8px;
}

/* context menu */

.context-menu {
    position: absolute;
    left: 140px;
    top: 271px;
    width: 227px;
    padding: 2px;
    border: 1px solid #ccc;
    background-color: #f0f0f0;
    box-shadow: 3px 3px 2px #888;
}

.context-menu button {
    display: flex;
    align-items: center;
    position: relative;
    width: 220px;
    height: 24px;
    padding-left: 34px;
}

.context-menu .tall {
    height: 26px;
    padding-left: 3px;
}

.context-menu svg {
    width: 19px;
    height: 19px;
    margin-right: 12px;
}

.context-menu kbd {
    position: absolute;
    left: 157px;
    font: inherit;
}

.context-menu button:disabled {
    color: #6d6d6d;
}

.context-menu .hover {
    background-color: #91c9f7;
}

.context-menu hr {
    height: 1px;
    margin: 4px 0 4px 30px;
    border: none;
    background-color: #d0d0d0;
}

/* annotation */

.arrow {
    position: absolute;
    left: 355px;
    top: 640px;
    width: 280px;
    height: 150px;
}

.note {
    position: absolute;
    left: 663px;
    top: 808px;
    color: #ff2010;
    font-size: 44px;
    line-height: 60px;
}
```
